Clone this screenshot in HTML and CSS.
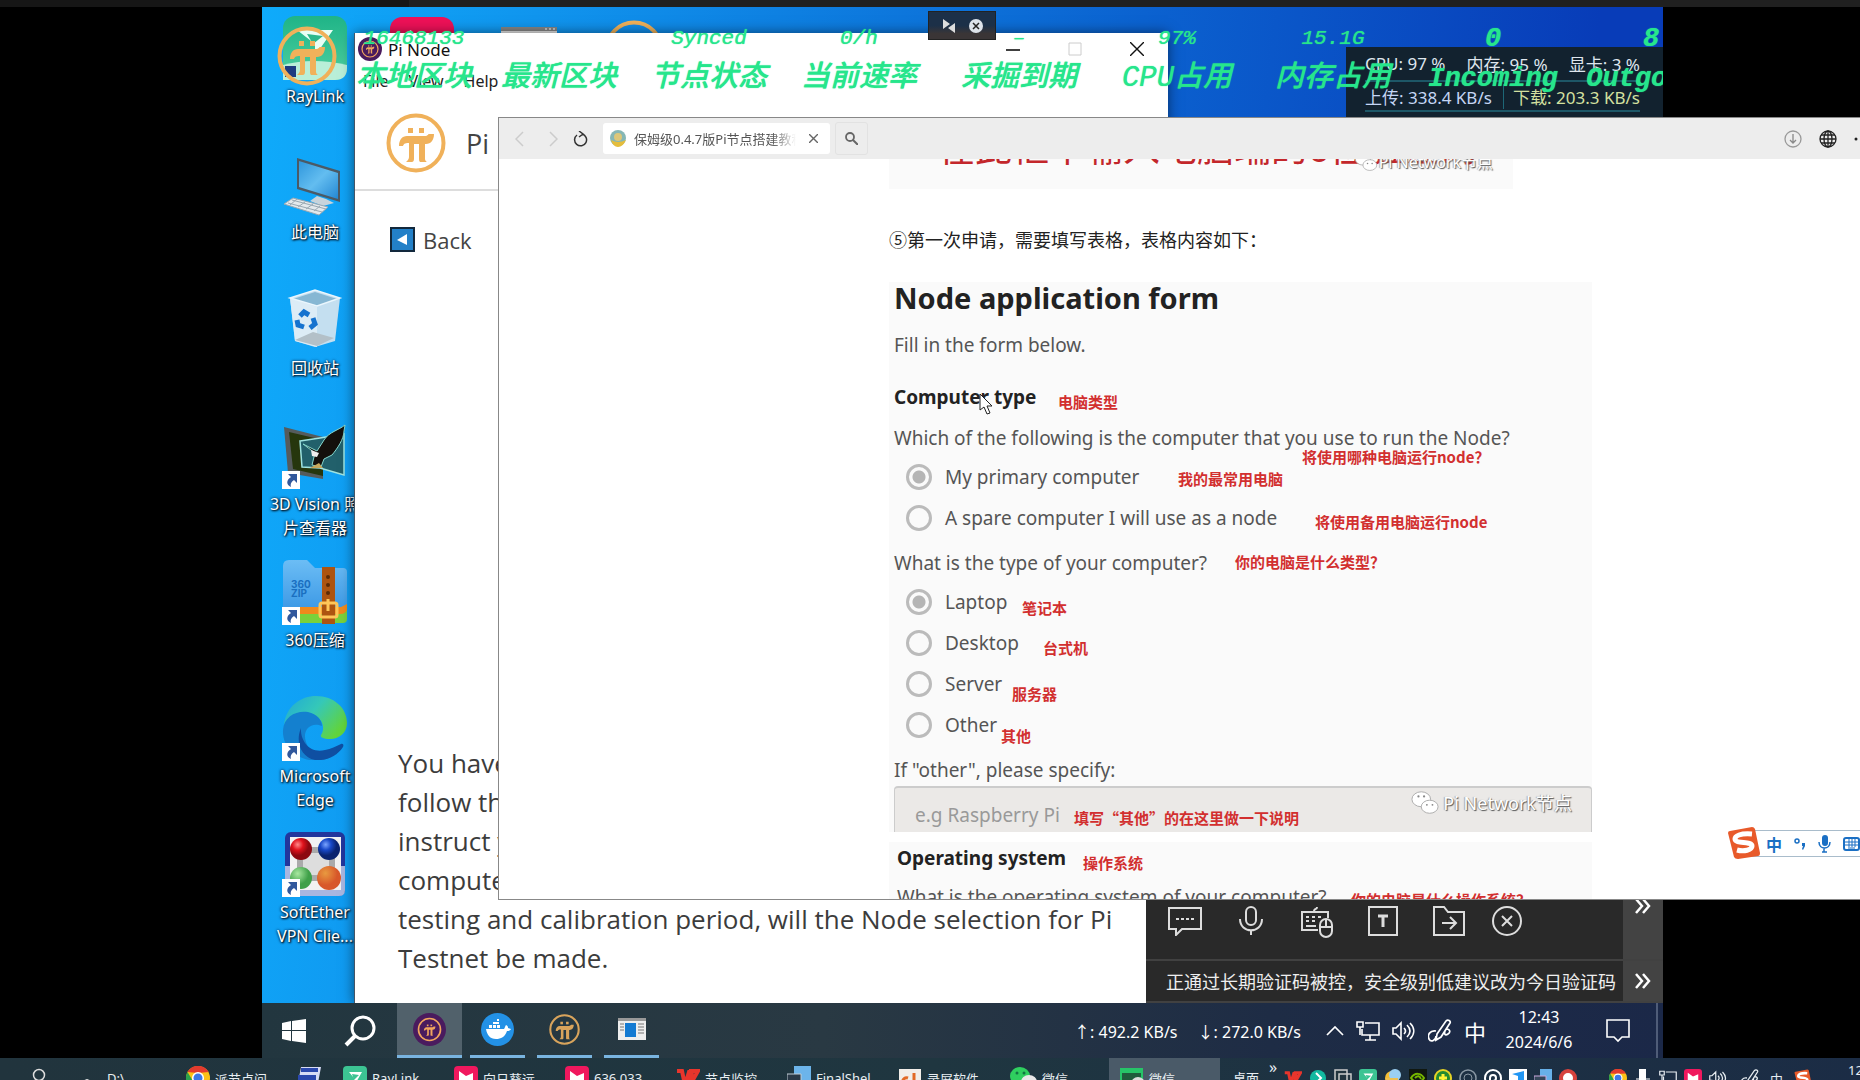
FILE: index.html
```html
<!DOCTYPE html>
<html lang="zh-CN">
<head>
<meta charset="utf-8">
<title>Pi Node</title>
<link rel="stylesheet" href="styles.css">
</head>
<body>
<svg class="defs" aria-hidden="true">
  <defs>
    <linearGradient id="g-ray" x1="0" y1="0" x2="0" y2="1"><stop offset="0" stop-color="#1fb487"/><stop offset="1" stop-color="#4fd0a0"/></linearGradient>
    <linearGradient id="g-scr" x1="0" y1="0" x2="1" y2="1"><stop offset="0" stop-color="#2f97dd"/><stop offset=".5" stop-color="#63bdf0"/><stop offset="1" stop-color="#2488d4"/></linearGradient>
    <linearGradient id="g-edge" x1="0" y1="0" x2="1" y2=".6"><stop offset="0" stop-color="#1fa8d8"/><stop offset=".5" stop-color="#35c8b8"/><stop offset="1" stop-color="#62d43c"/></linearGradient>
    <linearGradient id="g-zip" x1="0" y1="0" x2="0" y2="1"><stop offset="0" stop-color="#6cbdf5"/><stop offset="1" stop-color="#3f9be6"/></linearGradient>
    <radialGradient id="g-red" cx=".35" cy=".3"><stop offset="0" stop-color="#ff8a8a"/><stop offset=".5" stop-color="#e0121c"/><stop offset="1" stop-color="#8c0810"/></radialGradient>
    <radialGradient id="g-blu" cx=".35" cy=".3"><stop offset="0" stop-color="#7aa4ff"/><stop offset=".5" stop-color="#1848c8"/><stop offset="1" stop-color="#0a2370"/></radialGradient>
    <radialGradient id="g-grn" cx=".35" cy=".3"><stop offset="0" stop-color="#a8e8a0"/><stop offset="1" stop-color="#3fa048"/></radialGradient>
    <radialGradient id="g-org" cx=".35" cy=".3"><stop offset="0" stop-color="#e89a40"/><stop offset="1" stop-color="#d8582a"/></radialGradient>
    <symbol id="pi" viewBox="0 0 60 60">
      <g fill="currentColor"><rect x="22" y="15" width="5" height="5"/><rect x="33" y="15" width="5" height="5"/>
      <path d="M13 33c0-6 3-10 8-10h18c3 0 3-2 4-2h5c0 6-3 10-8 10h-1v14c0 3 1 3 2 4h-7c-1-1-1-2-1-4V31h-5v15c0 2-1 3-2 3h-6c2-2 3-3 3-5V30c-5 0-5 1-6 3z"/></g>
    </symbol>
    <symbol id="pi-ring" viewBox="0 0 60 60"><circle cx="30" cy="30" r="27.500" fill="none" stroke="currentColor" stroke-width="4"/><use href="#pi"/></symbol>
    <symbol id="pi-dark" viewBox="0 0 60 60"><circle cx="30" cy="30" r="30" fill="#4a1b5e"/><circle cx="30" cy="30" r="20" fill="none" stroke="#f2a65e" stroke-width="3"/><g color="#f2a65e" transform="translate(12 12) scale(.6)"><use href="#pi" width="60" height="60"/></g></symbol>
    <symbol id="shortcut" viewBox="0 0 18 18"><path fill="#fff" d="M0 0h18v18H0z"/><path fill="#31589c" d="M6 3h9v9l-3-3c-3 2-4 4-3 7-5-2-5-7 0-10z"/></symbol>
    <symbol id="ray" viewBox="0 0 24 24"><rect width="24" height="24" rx="4" fill="#3cc493"/><path fill="#fff" d="M6 6h13l-8 14v-8z"/><path fill="#3cc493" d="M9 8l7 1-5 5z"/></symbol>
    <symbol id="sun" viewBox="0 0 24 24"><rect width="24" height="24" rx="4" fill="#f0185e"/><path fill="#fff" d="M5 5l7 5 7-3v12l-7-2-7 4z"/></symbol>
    <symbol id="wps" viewBox="0 0 24 20"><path fill="none" stroke="#e8352c" stroke-width="4" d="M1 3h5l3 14 4-13h3l-2 13L22 3h-9"/></symbol>
    <symbol id="chrome" viewBox="0 0 24 24"><circle cx="12" cy="12" r="12" fill="#fbc116"/><path fill="#e33b2e" d="M1.500 6A12 12 0 0 1 22.500 6H12z"/><path fill="#2ca24c" d="M1.500 6l6 10 4 8A12 12 0 0 1 1.500 6z"/><path fill="#e33b2e" d="M1.500 6h21L12 7z"/><circle cx="12" cy="12" r="6" fill="#fff"/><circle cx="12" cy="12" r="4.500" fill="#3b78e7"/></symbol>
    <symbol id="wechat" viewBox="0 0 28 24"><ellipse cx="11" cy="10" rx="10" ry="9" fill="#2fcf5f"/><ellipse cx="20" cy="16" rx="8" ry="7" fill="#e8e8e8"/><circle cx="8" cy="7" r="1.500" fill="#174"/><circle cx="15" cy="7" r="1.500" fill="#174"/></symbol>
    <symbol id="net" viewBox="0 0 24 22"><g fill="none" stroke="currentColor" stroke-width="1.600"><path d="M9 3h14v12H6V9M14 15v5M9 20h11"/><path d="M1 2h6v5H1zM4 7v8"/></g></symbol>
    <symbol id="vol" viewBox="0 0 24 22"><g fill="none" stroke="currentColor" stroke-width="1.600"><path d="M1 8h3l5-5v16l-5-5H1zM12 8c2 2 2 4 0 6M15 5c4 4 4 8 0 12M18 3c5 5 5 11 0 16"/></g></symbol>
    <symbol id="pen" viewBox="0 0 24 24"><g fill="none" stroke="currentColor" stroke-width="1.700"><path d="M9 15L18 2c2-2 5 0 4 2L13 18l-5 3zM8 12c-6-1-9 4-7 8s7 1 7-3M18 10c4 0 5 3 2 5s-4 0-3-3"/></g></symbol>
    <symbol id="bubbles" viewBox="0 0 30 26"><g fill="#fff" stroke="#aaa" stroke-width="1"><ellipse cx="11" cy="9" rx="10" ry="8"/><ellipse cx="20" cy="17" rx="9" ry="7"/></g><g fill="#888"><circle cx="8" cy="6" r="1.200"/><circle cx="14" cy="6" r="1.200"/><circle cx="17" cy="15" r="1"/><circle cx="23" cy="15" r="1"/></g></symbol>
    <symbol id="more" viewBox="0 0 18 18"><path d="M2 2l6 7-6 7M9 2l6 7-6 7" fill="none" stroke="#fff" stroke-width="2.500"/></symbol>
    <symbol id="sogou" viewBox="0 0 34 34"><path fill="#e85a2a" d="M1 7Q1 5 3 5L25 1q2 0 3 2l5 24q0 3-2 3L11 33q-3 0-4-2z"/><path d="M25 8C13 7 8 10 8 13c0 5 17 2 17 7 0 4-8 6-15 4" fill="none" stroke="#fff" stroke-width="5"/></symbol>
  </defs>
</svg>

<div class="page">
  <div class="topstrip"></div>

  <main class="stage">
    <section class="remote" aria-label="Remote desktop">
      <div class="desktop">
        <div class="second-col">
          <svg viewBox="0 0 64 64" width="64" height="64"><rect width="64" height="64" rx="12" fill="#ee1158"/><path d="M12 18l9-5 5 10z" fill="#fff"/></svg>
          <svg viewBox="0 0 56 54" width="56" height="54"><path fill="#e6e6e6" d="M0 0h56v54H0z"/><path fill="#858585" d="M0 0h56v4H0z"/><path stroke="#fff" stroke-dasharray="2 2" d="M44 2h12"/></svg>
          <svg class="gold" width="60" height="60"><use href="#pi-ring"/></svg>
        </div>
        <ul class="icons">
          <li><svg viewBox="0 0 64 64"><rect width="64" height="64" rx="12" fill="url(#g-ray)"/><path fill="#e8fff5" d="M14 14h36L32 40V28z"/><path fill="#2db88b" d="M24 18l16 2-10 8z"/><path fill="#b9efd8" d="M0 49q30-8 64 0v3q0 12-12 12H0z"/><path fill="#1e3c80" d="M2 50h11v11H2z"/></svg><span>RayLink</span></li>
          <li><svg viewBox="0 0 64 64"><path fill="#4b5a66" d="M14 6l43 13v31L14 37z"/><path fill="url(#g-scr)" d="M16 9l39 12v26L16 35z"/><path fill="#c8d4dc" d="M34 44l9 3 8 4-11 3-13-5z"/><path fill="#e4e9ec" stroke="#9aa8b2" d="M1 52l9-6 35 9-9 8z"/><path d="M5 51l34 9M9 48l34 9M14 47l-7 6M22 50l-7 5M30 52l-7 5M37 54l-6 5" stroke="#9aa8b2"/></svg><span>此电脑</span></li>
          <li><svg viewBox="0 0 64 64"><path fill="#c4dff0" d="M7 10l25-8 25 8-5 43-20 6-20-6z"/><path fill="#86b7d3" d="M10 11l22-7 22 7-20 7z"/><path fill="#dcecf6" d="M7 10l27 9v40l-22-6z"/><path fill="#b3c0c8" d="M12 52l18-8 21 6-17 8z"/><path stroke="#eaf6fd" stroke-width="1.500" fill="none" d="M7 10l25-8 25 8-23 8z"/><g fill="none" stroke="#1673cf" stroke-width="5"><path d="M17 28l4-4 5 3M30 30l2 6-5 4M21 39l-6-2-1-5"/></g></svg><span>回收站</span></li>
          <li><svg viewBox="0 0 64 64"><path fill="#555b5c" d="M1 3l39 10v42L5 49z"/><path fill="#26360d" d="M6 8l34 8v36L10 45z"/><path fill="#22606b" stroke="#9fe3e0" stroke-width="1.500" d="M17 17l20-3 24-4v41l-24-7-18-1z"/><path fill="#14100c" stroke="#86d9cf" d="M62 1C56 6 46 8 41 16L34 27l-14-7 12 9-3 12 9 2 3-8 8-4c5-6 12-16 12-24z"/><path fill="#eee" d="M28 26l8 3-2 4-5-1z"/><path fill="#c8a85c" d="M27 44l9-5 4 5z"/></svg><svg class="arrow"><use href="#shortcut"/></svg><span>3D Vision 照<br>片查看器</span></li>
          <li><svg viewBox="0 0 64 64"><path fill="#7ad13b" d="M0 46h64v13q0 4-4 4H0z"/><path fill="#f08a1c" d="M0 44h64v6q-2 4-6 4H0z"/><path fill="url(#g-zip)" d="M0 6q0-6 6-6h18l8 8h28q4 0 4 4v32l-6 3H0z"/><path fill="#ad5410" d="M39 7h13v57H39z"/><g fill="#5c2a05"><circle cx="45" cy="17" r="2"/><circle cx="45" cy="25" r="2"/><circle cx="45" cy="33" r="2"/></g><rect x="37" y="43" width="17" height="14" rx="2" fill="none" stroke="#ffc658" stroke-width="3"/><path d="M45 39v12" stroke="#ffc658" stroke-width="3"/><g class="zip"><text x="8" y="28">360</text><text x="8" y="37">ZIP</text></g></svg><svg class="arrow"><use href="#shortcut"/></svg><span>360压缩</span></li>
          <li><svg viewBox="0 0 64 64"><path fill="url(#g-edge)" d="M1 29C3 10 18 0 33 0c18 0 31 12 31 27 0 10-8 16-17 16-7 0-10-2-9-4 4-5 3-16-8-21C18 14 6 18 1 29z"/><path fill="#1480cf" d="M0 34C1 20 14 14 25 16c9 2 14 8 14 14-12-5-20 5-16 16 3 9 10 14 20 18C18 68-1 54 0 34z"/><path fill="#0f4fa2" d="M18 32c-1 13 9 26 24 22 6-1 11-4 16-6 2-1 3 1 2 3-6 9-16 14-28 13-14-3-20-18-14-32z"/></svg><svg class="arrow"><use href="#shortcut"/></svg><span>Microsoft<br>Edge</span></li>
          <li><svg viewBox="0 0 64 64"><rect x="2" width="60" height="64" rx="6" fill="#22369c"/><path fill="#a9b6e0" d="M2 34h60v24q0 6-6 6H2z"/><path fill="#f2f2f2" d="M7 5h51v53H7z"/><path d="M17 18h32v28H17z" stroke="#aaa" stroke-width="6" fill="#ddd"/><circle cx="18" cy="17" r="11" fill="url(#g-red)"/><circle cx="46" cy="17" r="11" fill="url(#g-blu)"/><circle cx="18" cy="46" r="11" fill="url(#g-grn)"/><circle cx="46" cy="46" r="12" fill="url(#g-org)"/></svg><svg class="arrow"><use href="#shortcut"/></svg><span>SoftEther<br>VPN Clie...</span></li>
        </ul>

        <section class="node-win">
          <header class="titlebar">
            <svg width="24" height="24"><use href="#pi-dark"/></svg><span>Pi Node</span>
            <div class="controls">
              <button aria-label="Minimize"><svg width="14" height="14"><path d="M0 8h14" stroke="#000" stroke-width="1.500"/></svg></button>
              <button aria-label="Maximize"><svg width="14" height="14"><path d="M1 1h12v12H1z" stroke="#ccc" fill="none"/></svg></button>
              <button aria-label="Close"><svg width="14" height="14"><path d="M0 0l14 14M14 0L0 14" stroke="#111" stroke-width="1.400"/></svg></button>
            </div>
          </header>
          <nav class="menubar"><button>File</button><button>View</button><button>Help</button></nav>
          <div class="brand"><svg class="gold" width="60" height="60"><use href="#pi-ring"/></svg><h1>Pi Node</h1></div>
          <a class="back" href="#"><svg width="25" height="25"><path fill="#2380c8" stroke="#12283c" stroke-width="2" d="M1 1h23v23H1z"/><path fill="#fff" d="M17 7v11l-10-5z"/></svg>Back</a>
          <p class="notice">You have submitted your application, please<br>follow the steps in this guide, they will<br>instruct you on how to prepare your<br>computer. Only after the end of this first<br>testing and calibration period, will the Node selection for Pi<br>Testnet be made.</p>
        </section>

        <aside class="monitor">
          <div class="stats"><span>CPU: 97 %</span><span>内存: 95 %</span><span>显卡: 3 %</span></div>
          <div class="stats net"><span>上传: 338.4 KB/s</span><span class="down">下载: 203.3 KB/s</span></div>
        </aside>

        <aside class="assist">
          <div class="tools">
            <button aria-label="Chat"><svg width="34" height="30" viewBox="0 0 34 30"><path d="M1 2h32v21H14l-6 6v-6H1zM8 13h3M13 13h3M18 13h3M23 13h3"/></svg></button>
            <button aria-label="Voice"><svg width="26" height="30" viewBox="0 0 26 30"><rect x="8" y="1" width="10" height="18" rx="5"/><path d="M2 13c0 15 22 15 22 0M13 24v5"/></svg></button>
            <button aria-label="Keyboard and mouse"><svg width="34" height="32" viewBox="0 0 34 32"><path d="M18 24H2V6h26v6M14 6c0-5 3-1 3-5M6 11h3M12 11h3M18 11h3M6 15h3M12 15h3M6 20h10"/><rect x="20" y="13" width="12" height="18" rx="6"/><path d="M20 21h12M26 13v8"/></svg></button>
            <button aria-label="Text"><svg width="30" height="30" viewBox="0 0 30 30"><path d="M1 1h28v28H1z"/><path d="M10 10h10M15 10v11" stroke-width="3"/></svg></button>
            <button aria-label="Send file"><svg width="32" height="30" viewBox="0 0 32 30"><path d="M1 29V1h10l4 5h16v23zM9 17h14M17 11l6 6-6 6"/></svg></button>
            <button aria-label="Disconnect"><svg width="30" height="30" viewBox="0 0 30 30"><circle cx="15" cy="15" r="14"/><path d="M10 10l10 10M20 10L10 20"/></svg></button>
          </div>
          <button class="fold" aria-label="Collapse tools"><svg width="18" height="18"><use href="#more"/></svg></button>
          <p>正通过长期验证码被控，安全级别低建议改为今日验证码</p>
          <button class="fold low" aria-label="Collapse message"><svg width="18" height="18"><use href="#more"/></svg></button>
        </aside>

        <div class="overlay">
          <svg class="gold ring" width="60" height="60"><use href="#pi-ring"/></svg>
          <dl class="hud">
            <div><dd>16468133</dd><dt>本地区块</dt></div>
            <div><dd></dd><dt>最新区块</dt></div>
            <div><dd>Synced</dd><dt>节点状态</dt></div>
            <div><dd>0/h</dd><dt>当前速率</dt></div>
            <div><dd>–</dd><dt>采掘到期</dt></div>
            <div><dd>97%</dd><dt>CPU占用</dt></div>
            <div><dd>15.1G</dd><dt>内存占用</dt></div>
            <div class="wide"><dd>0</dd><dt>Incoming</dt></div>
            <div class="wide"><dd>8</dd><dt>Outgoing</dt></div>
          </dl>
        </div>
      </div>

      <footer class="taskbar">
        <button aria-label="Start"><svg width="24" height="24" viewBox="0 0 24 24"><path fill="#fff" d="M0 4l9-2v9H0zM10 2l14-2v11H10zM0 12h9v10l-9-2zM10 12h14v12l-14-2z"/></svg></button>
        <button aria-label="Search"><svg width="32" height="32" viewBox="0 0 32 32"><circle cx="19" cy="13" r="11" fill="none" stroke="#fff" stroke-width="3"/><path d="M11 21l-9 9" stroke="#fff" stroke-width="4"/></svg></button>
        <button class="app active" aria-label="Pi Node"><svg width="33" height="33"><use href="#pi-dark"/></svg></button>
        <button class="app" aria-label="Docker"><svg width="33" height="33" viewBox="0 0 33 33"><circle cx="16.500" cy="16.500" r="16.500" fill="#2391e6"/><path fill="#fff" d="M5 16h18c1-1 1-3 2-4 2 1 2 2 2 3l3 1c-1 2-3 2-4 2-2 6-6 8-11 8-6 0-9-4-10-10zM8 12h3v3H8zM12 12h3v3h-3zM16 12h3v3h-3zM12 9h6v2h-6zM16 6h2v2h-2z"/></svg></button>
        <button class="app" aria-label="Pi Network"><svg class="tan" width="31" height="31"><use href="#pi-ring"/></svg></button>
        <button class="app" aria-label="Application"><svg width="28" height="22" viewBox="0 0 28 22"><path fill="#eee" d="M0 0h28v22H0z"/><path fill="#999" d="M0 0h28v3H0z"/><path fill="#137ad2" d="M7 5h11v14H7z"/><path stroke="#777" d="M2 6h4M2 9h4M2 12h4M20 6h6M20 9h6M20 12h6M20 15h6"/></svg></button>
        <div class="speed"><span>↑: 492.2 KB/s</span><span>↓: 272.0 KB/s</span></div>
        <div class="tray">
          <svg width="18" height="10"><path d="M1 9l8-8 8 8" fill="none" stroke="#fff" stroke-width="1.700"/></svg>
          <svg width="24" height="22"><use href="#net"/></svg>
          <svg width="24" height="22"><use href="#vol"/></svg>
          <svg width="24" height="24"><use href="#pen"/></svg>
          <span class="ime">中</span>
        </div>
        <time>12:43<br>2024/6/6</time>
        <button class="bell" aria-label="Notifications"><svg width="24" height="24" viewBox="0 0 24 24"><path d="M1 1h22v17h-7l-4 4-4-4H1z" fill="none" stroke="#fff" stroke-width="1.600"/></svg></button>
        <button class="peek" aria-label="Show desktop"></button>
      </footer>
      <div class="session-bar">
        <button aria-label="Switch"><svg width="14" height="14"><path fill="#ddd" d="M1 0l7 5-7 5zM13 4v10L6 9z"/></svg></button>
        <button aria-label="Close session"><svg width="14" height="14"><circle cx="7" cy="7" r="7" fill="#dde3ea"/><path d="M4 4l6 6M10 4l-6 6" stroke="#222" stroke-width="1.500"/></svg></button>
      </div>
    </section>

    <section class="browser">
      <header class="toolbar">
        <button aria-label="Back"><svg width="9" height="16"><path d="M8 1L1 8l7 7" fill="none" stroke="#ccc" stroke-width="1.500"/></svg></button>
        <button aria-label="Forward"><svg width="9" height="16"><path d="M1 1l7 7-7 7" fill="none" stroke="#ccc" stroke-width="1.500"/></svg></button>
        <button aria-label="Reload"><svg width="15" height="16" viewBox="0 0 15 16"><path d="M9 3A6 6 0 1 1 4 4M6 0l4 3-4 3" fill="none" stroke="#333" stroke-width="1.500"/></svg></button>
        <div class="tab"><svg width="17" height="17"><circle cx="8" cy="8" r="8" fill="#86b7b5"/><path fill="#e5bd3c" d="M1 10q7 4 15 0q-3 7-8 7t-7-7z"/><circle cx="8" cy="7" r="4" fill="#dcc779"/></svg><span>保姆级0.4.7版Pi节点搭建教程</span><button aria-label="Close tab"><svg width="9" height="9"><path d="M0 0l9 9M9 0L0 9" stroke="#666" stroke-width="1.400"/></svg></button></div>
        <button class="find" aria-label="Search"><svg width="13" height="13"><circle cx="5" cy="5" r="4" fill="none" stroke="#666" stroke-width="1.800"/><path d="M8 8l5 5" stroke="#666" stroke-width="2"/></svg></button>
        <div class="right-tools">
          <button aria-label="Downloads"><svg width="18" height="18"><circle cx="9" cy="9" r="8" fill="none" stroke="#999" stroke-width="1.300"/><path d="M9 4v9M6 10l3 3 3-3" fill="none" stroke="#888" stroke-width="1.300"/></svg></button>
          <button aria-label="Open in browser"><svg width="18" height="18"><g fill="none" stroke="#222" stroke-width="1.300"><circle cx="9" cy="9" r="8"/><ellipse cx="9" cy="9" rx="4" ry="8"/><path d="M9 1v16M1 9h16M2 5h14M2 13h14"/></g></svg></button>
          <button aria-label="More"><svg width="14" height="4"><g fill="#222"><circle cx="2" cy="2" r="1.500"/><circle cx="8" cy="2" r="1.500"/></g></svg></button>
        </div>
      </header>
      <article>
        <figure class="strip"><p>在此框中输入电脑端的6位验证码</p><figcaption class="mark"><svg width="24" height="20"><use href="#bubbles"/></svg>Pi Network节点</figcaption></figure>
        <p class="step">⑤第一次申请，需要填写表格，表格内容如下：</p>
        <form class="sheet">
          <h2>Node application form</h2>
          <p class="fill">Fill in the form below.</p>
          <h3>Computer type</h3>
          <p>Which of the following is the computer that you use to run the Node?</p>
          <div class="choices">
            <label><input type="radio" name="use" checked>My primary computer</label>
            <label><input type="radio" name="use">A spare computer I will use as a node</label>
          </div>
          <p>What is the type of your computer?</p>
          <div class="choices">
            <label><input type="radio" name="kind" checked>Laptop</label>
            <label><input type="radio" name="kind">Desktop</label>
            <label><input type="radio" name="kind">Server</label>
            <label><input type="radio" name="kind">Other</label>
          </div>
          <label class="ask" for="other">If "other", please specify:</label>
          <input class="other" id="other" type="text" placeholder="e.g Raspberry Pi">
          <span class="note n-type">电脑类型</span>
          <span class="note n-which">将使用哪种电脑运行node？</span>
          <span class="note n-main">我的最常用电脑</span>
          <span class="note n-spare">将使用备用电脑运行node</span>
          <span class="note n-kind">你的电脑是什么类型？</span>
          <span class="note n-laptop">笔记本</span>
          <span class="note n-desk">台式机</span>
          <span class="note n-server">服务器</span>
          <span class="note n-other">其他</span>
          <span class="note n-fill">填写“其他”的在这里做一下说明</span>
          <span class="mark"><svg width="28" height="26"><use href="#bubbles"/></svg>Pi Network节点</span>
          <svg class="cursor" width="14" height="22" viewBox="0 0 14 22"><path fill="#fff" stroke="#222" d="M1 1v16l4-3 3 7 3-1-3-7h5z"/></svg>
        </form>
        <section class="sheet os">
          <h3>Operating system</h3>
          <p>What is the operating system of your computer?</p>
          <span class="note n-os">操作系统</span>
          <span class="note n-osq">你的电脑是什么操作系统？</span>
        </section>
      </article>
      <div class="ime-bar">
        <svg class="logo" width="34" height="34"><use href="#sogou"/></svg>
        <b>中</b>
        <svg width="12" height="13"><circle cx="3" cy="4" r="2" fill="none" stroke="#1a6fc4" stroke-width="1.500"/><path d="M8 6h3v3l-2 4-1-1 1-3H8z" fill="#1a6fc4"/></svg>
        <svg width="13" height="18"><rect x="4" width="6" height="11" rx="3" fill="#1a6fc4"/><path d="M1 7c0 8 11 8 11 0M6 13v4M4 17h5" fill="none" stroke="#1a6fc4" stroke-width="1.500"/></svg>
        <svg width="17" height="14"><rect x="1" y="1" width="15" height="12" rx="2" fill="none" stroke="#1a6fc4" stroke-width="2"/><path d="M2 5h13M2 8h13M6 2v8M9 2v8M12 2v8M5 11h7" stroke="#1a6fc4"/></svg>
      </div>
    </section>
  </main>

  <footer class="local">
    <div class="lead">
      <svg width="14" height="24" viewBox="0 0 14 24"><circle cx="7" cy="9" r="5.500" fill="none" stroke="#ddd" stroke-width="1.500"/></svg>
      <svg class="drive" width="10" height="4"><path d="M0 3l5-2 5 2z" fill="#eee"/></svg>
      <span>D:\</span>
    </div>
    <button class="task"><svg width="24" height="24"><use href="#chrome"/></svg>派节点问</button>
    <button class="task slim" aria-label="Remote tool"><svg width="24" height="24"><path fill="#d7dcf5" d="M4 1h20l-3 16H1z"/><path fill="#2b49ae" d="M4 2h17v4H4zM1 9h18v7H1z"/></svg></button>
    <button class="task"><svg width="24" height="24"><use href="#ray"/></svg>RayLink</button>
    <button class="task"><svg width="24" height="24"><use href="#sun"/></svg>向日葵远</button>
    <button class="task"><svg width="24" height="24"><use href="#sun"/></svg>636,033</button>
    <button class="task"><svg width="24" height="20"><use href="#wps"/></svg>节点监控</button>
    <button class="task"><svg width="24" height="24"><path fill="#6cb4ea" d="M7 0h17v14H7z"/><path fill="#2a3947" stroke="#c0ccd4" d="M0 8h14v12H0z"/></svg>FinalShel</button>
    <button class="task"><svg width="24" height="24"><path fill="#f2eee9" d="M1 3h22v21H1z"/><path fill="none" stroke="#e26a26" stroke-width="3" d="M10 12a4 4 0 1 0 1 7M16 7v11"/></svg>录屏软件</button>
    <button class="task"><svg width="28" height="24"><use href="#wechat"/></svg>微信</button>
    <button class="task on"><svg width="24" height="24"><path fill="#1f5c3c" stroke="#27c468" stroke-width="2" d="M1 3h21v21H1z"/><path fill="#27c468" d="M1 2h21v5H1z"/><circle cx="18" cy="18" r="7" fill="#ddd"/></svg>微信</button>
    <span class="desk">桌面</span><span class="chev">»</span>
    <div class="mini">
      <svg width="18" height="16"><use href="#wps"/></svg>
      <svg width="18" height="18"><circle cx="9" cy="9" r="8" fill="#12b8a0"/><path d="M7 4l5 5-5 5" stroke="#fff" stroke-width="2" fill="none"/></svg>
      <svg width="18" height="18"><path d="M1 1h12v11H1zM5 5h12v12H5z" fill="#22343e" stroke="#ccc" stroke-width="1.500"/></svg>
      <svg width="18" height="18"><use href="#ray"/></svg>
      <svg width="18" height="18"><circle cx="8" cy="9" r="7" fill="#f4bd34"/><circle cx="11" cy="6" r="6" fill="#9bd0f2"/><path d="M2 9h12v8H2z" fill="#eec050"/></svg>
      <svg width="18" height="18"><path d="M0 0h18v18H0z" fill="#101810"/><path d="M2 9c4-6 10-5 13 0-4 6-9 5-13 0zM6 9q4-4 6 1" fill="none" stroke="#76b900" stroke-width="2"/></svg>
      <svg width="18" height="18"><circle cx="9" cy="9" r="9" fill="#e5d326"/><circle cx="9" cy="9" r="7" fill="#238a31"/><path d="M5 9h8M9 5v8" stroke="#fff336" stroke-width="3"/></svg>
      <svg width="18" height="18"><circle cx="9" cy="9" r="8" fill="none" stroke="#8a98a4" stroke-width="1.500"/><circle cx="9" cy="9" r="4" fill="none" stroke="#8a98a4"/></svg>
      <svg width="18" height="18"><circle cx="9" cy="9" r="8" fill="none" stroke="#fff" stroke-width="2"/><path d="M6 13V9a3 3 0 1 1 3 3" fill="none" stroke="#fff" stroke-width="2"/></svg>
      <svg width="18" height="18"><path d="M0 0h18v18H0z" fill="#fff"/><path d="M3 5l12-3v12H9V7z" fill="#2196f3"/></svg>
      <svg width="18" height="18"><path d="M6 0h12v12H6z" fill="#67b0e8"/><path d="M0 7h12v9H0z" fill="#35475a" stroke="#cad"/></svg>
      <svg width="18" height="18"><circle cx="9" cy="9" r="7" fill="#fff" stroke="#d6423d" stroke-width="4"/></svg>
    </div>
    <div class="mini end">
      <svg width="18" height="18"><use href="#chrome"/></svg>
      <svg width="18" height="18"><rect x="5" width="7" height="13" fill="#fff"/><path d="M2 10h14" stroke="#fff"/></svg>
      <svg width="18" height="18"><use href="#net"/></svg>
      <svg width="18" height="18"><use href="#sun"/></svg>
      <svg width="18" height="18"><use href="#vol"/></svg>
    </div>
    <div class="mini ime-tray">
      <svg width="18" height="18"><use href="#pen"/></svg>
      <span>中</span>
      <svg width="18" height="18"><use href="#sogou"/></svg>
    </div>
    <time class="clock">12:43</time>
  </footer>
</div>
</body>
</html>
```
FILE: styles.css
```css
* { box-sizing: border-box; }
body { margin: 0; background: #000; color: #333; font-family: "Noto Sans", "Noto Sans CJK SC", sans-serif; overflow: hidden; }
h1, h2, h3, p, ul, dl, dd, figure { margin: 0; padding: 0; }
button { border: 0; padding: 0; background: none; color: inherit; font: inherit; display: flex; align-items: center; justify-content: center; }
svg { display: block; flex: none; }
.defs { position: absolute; width: 0; height: 0; }
.gold { color: #f0b15a; }
.tan { color: #d9a45c; }

.page { display: flex; flex-direction: column; height: 100vh; }
.topstrip { height: 7px; flex: none; background: linear-gradient(90deg, #161616 22%, #202020 22%); }
.stage { position: relative; flex: 1; min-height: 0; overflow: hidden; }
.remote { position: relative; height: 100%; margin: 0 197px 0 262px; display: flex; flex-direction: column; overflow: hidden; }
.desktop { position: relative; flex: 1; min-height: 0; overflow: hidden; background: linear-gradient(97deg, #0fabfb 0%, #1095ee 18%, #0b62d0 58%, #083cb8 88%); }

/* desktop icons */
.icons { list-style: none; width: 106px; padding-top: 9px; }
.icons li { position: relative; height: 136px; display: flex; flex-direction: column; align-items: center; gap: 4px; font-size: 16px; line-height: 24px; color: #fff; text-align: center; white-space: nowrap; text-shadow: 1px 1px 2px #000, 0 0 3px #002; }
.icons li > svg:first-child { width: 66px; height: 64px; }
.icons .arrow { position: absolute; left: 20px; top: 47px; width: 18px; height: 18px; }
.zip { font: 700 10px "Inter", sans-serif; fill: #1a6fc0; text-shadow: none; }
.second-col { position: absolute; left: 128px; top: 10px; display: flex; gap: 47px; align-items: flex-start; }
.second-col svg:nth-child(2) { margin-top: 10px; }
.second-col svg:nth-child(3) { margin-top: 3px; }

/* Pi Node window */
.node-win { position: absolute; left: 92px; top: 26px; width: 814px; bottom: 0; background: #fff; border-left: 1px solid #456; box-shadow: 0 0 12px #0008; display: flex; flex-direction: column; }
.titlebar { display: flex; align-items: center; height: 32px; padding-left: 3px; gap: 6px; font-size: 17px; color: #111; }
.controls { margin-left: auto; display: flex; }
.controls button { width: 62px; height: 32px; }
.menubar { display: flex; gap: 20px; height: 32px; padding-left: 8px; font-size: 16px; color: #222; }
.brand { display: flex; align-items: center; gap: 20px; height: 94px; padding: 0 0 0 31px; border-bottom: 2px solid #ddd; color: #444; }
.brand h1 { font: 400 27px "Open Sans", sans-serif; }
.back { display: flex; align-items: center; gap: 8px; margin: 36px 0 0 35px; height: 25px; color: #444; font: 22px "Open Sans", sans-serif; text-decoration: none; }
.notice { margin: auto 0 25px 43px; color: #3c3c3c; font: 26px/39px "Open Sans", sans-serif; white-space: nowrap; }

/* hardware monitor */
.monitor { position: absolute; right: 0; top: 40px; width: 317px; height: 72px; padding: 0 23px 0 19px; background: #12222f; color: #dfe6ee; font-size: 17px; }
.stats { display: flex; justify-content: space-between; align-items: center; height: 35px; border-bottom: 2px solid #1d5767; white-space: nowrap; }
.stats.net { height: 30px; color: #c5d6f5; }
.down { color: #d4e0a0; padding-left: 9px; border-left: 1px solid #1d6777; }

/* remote-control helper */
.assist { position: absolute; right: 0; bottom: 0; width: 517px; height: 114px; display: grid; grid-template: 72px 42px / 1fr 40px; background: #292929; color: #eee; }
.assist > * { border-bottom: 2px solid #414141; }
.tools { display: flex; padding: 17px 0 0 6px; }
.tools button { width: 66px; align-items: flex-start; }
.tools button:last-child { width: 49px; }
.tools svg { fill: none; stroke: #ddd; stroke-width: 2; }
.fold { background: #434343; padding-top: 8px; align-items: flex-start; }
.fold.low { padding: 0; align-items: center; }
.assist p { padding-left: 20px; font-size: 18px; line-height: 42px; white-space: nowrap; }

/* green node read-out */
.overlay { position: absolute; left: 0; right: 0; top: 0; height: 110px; overflow: hidden; color: #26e68c; }
.ring { position: absolute; left: 15px; top: 19px; }
.hud { position: absolute; left: 79px; top: 16px; display: grid; grid-template-columns: 146px 144px 156px 144px 176px 140px 172px 148px 168px; font-family: "Liberation Mono", "Noto Sans CJK SC", monospace; font-weight: 500; font-style: italic; text-align: center; text-shadow: 0 0 1px #2fe08f; }
.hud dd { height: 32px; font-size: 21px; line-height: 32px; }
.hud dt { font-size: 29px; line-height: 48px; white-space: nowrap; }
.hud .wide { font-weight: 700; }
.hud .wide dd { font-size: 27px; }
.hud .wide dt { font-size: 27px; }

.session-bar { position: absolute; left: 666px; top: 4px; width: 68px; height: 29px; display: flex; align-items: center; justify-content: center; gap: 13px; background: linear-gradient(#1c3048 50%, #3a3536 80%); border: 1px solid #222; }

/* remote taskbar */
.taskbar { flex: none; display: flex; align-items: stretch; height: 55px; background: linear-gradient(90deg, #22363f, #293943 40%, #1e2c45 72%, #1b2848); color: #fff; }
.taskbar > button { width: 67px; }
.taskbar > button:first-child { width: 64px; }
.taskbar .app { border-bottom: 3px solid #79b4e0; width: 55px; margin-left: 12px; }
.taskbar .app.active { width: 65px; background: #51616b; margin: 0 -4px 0 4px; }
.speed { margin-left: auto; display: flex; gap: 20px; align-items: center; font-size: 16px; white-space: nowrap; }
.tray { display: flex; align-items: center; gap: 12px; margin-left: 25px; }
.ime { font-size: 22px; }
.taskbar time { width: 106px; text-align: center; font-size: 16px; line-height: 25px; padding-top: 2px; }
.taskbar .bell { width: 52px; }
.taskbar .peek { width: 7px; margin-left: 12px; border-left: 2px solid #4f5c78; }

/* browser window */
.browser { position: absolute; left: 498px; right: 0; top: 110px; bottom: 158px; border: solid #888; border-width: 1px 0 1px 1px; background: #fff; overflow: hidden; display: flex; flex-direction: column; }
.toolbar { flex: none; height: 41px; padding: 0 0 0 16px; background: #ededed; display: flex; align-items: center; }
.toolbar > button { width: 34px; justify-content: flex-start; }
.toolbar > button:nth-child(3) { width: 21px; margin-left: -10px; margin-right: 9px; }
.tab { display: flex; align-items: center; gap: 7px; width: 227px; height: 31px; padding: 0 12px 0 7px; background: #fff; border-radius: 3px; font-size: 13px; color: #555; white-space: nowrap; }
.tab span { flex: 1; min-width: 0; margin-right: 6px; overflow: hidden; -webkit-mask: linear-gradient(90deg, #000 85%, transparent); mask: linear-gradient(90deg, #000 85%, transparent); }
.toolbar .find { width: 33px; height: 33px; margin-left: 5px; border: 1px solid #e2e2e2; border-radius: 3px; justify-content: center; }
.right-tools { display: flex; gap: 17px; margin: 0 -8px 0 auto; }

/* article */
article { margin-left: 390px; width: 703px; }
.strip { position: relative; width: 624px; height: 30px; background: #fafafa; overflow: hidden; }
.strip p { margin: -29px 0 0 49px; color: #c3272b; font-size: 37px; line-height: 36px; white-space: nowrap; }
.mark { position: absolute; display: flex; align-items: center; gap: 4px; font-size: 18px; line-height: 26px; color: #fff; text-shadow: 1px 1px 1px #555, -1px 0 1px #aaa; white-space: nowrap; }
.strip .mark { right: 20px; top: -10px; font-size: 16px; gap: 1px; }
.step { margin: 36px 0 27px; font-size: 18px; line-height: 30px; color: #222; white-space: nowrap; }
.sheet { position: relative; padding-left: 5px; background: #fafafa; color: #555; font-size: 19px; line-height: 32px; white-space: nowrap; }
.sheet h2 { font-size: 29px; line-height: 32px; color: #222; }
.sheet h3 { margin-top: 20px; font-size: 19px; line-height: 32px; color: #222; }
.sheet p { margin-top: 9px; }
.sheet .fill { margin-top: 15px; }
.choices { padding: 2px 0 0 12px; }
.choices label { display: flex; align-items: center; gap: 13px; height: 41px; }
.choices input { appearance: none; width: 26px; height: 26px; margin: 0; border: 3px solid #bbb; border-radius: 50%; background: #fafafa; }
.choices input:checked { background: radial-gradient(circle, #b5b5b5 6px, #fafafa 7px); }
.ask { display: block; margin-top: 9px; }
.other { display: block; width: 698px; height: 46px; margin: 0; padding: 9px 20px 0; border: 1px solid #ccc; border-width: 2px 1px 0; border-radius: 4px 4px 0 0; background: #ebe9e7; font: inherit; outline: 0; }
.other::placeholder { color: #999; opacity: 1; }
.note { position: absolute; color: #d22f2f; font: 700 15px/20px "Noto Sans CJK SC", sans-serif; }
.n-type { left: 169px; top: 110px; }
.n-which { left: 413px; top: 165px; }
.n-main { left: 289px; top: 187px; }
.n-spare { left: 426px; top: 230px; }
.n-kind { left: 346px; top: 270px; }
.n-laptop { left: 133px; top: 316px; }
.n-desk { left: 154px; top: 356px; }
.n-server { left: 123px; top: 402px; }
.n-other { left: 112px; top: 444px; }
.n-fill { left: 185px; top: 526px; }
form .mark { right: 20px; top: 508px; }
.cursor { position: absolute; left: 90px; top: 111px; }
.os { margin-top: 10px; padding-left: 8px; height: 80px; }
.os h3 { margin: 0; }
.os p { margin-top: 7px; }
.n-os { left: 194px; top: 11px; }
.n-osq { left: 462px; top: 48px; }

/* input-method bar */
.ime-bar { position: absolute; right: 0; bottom: 42px; width: 112px; height: 27px; display: flex; align-items: center; gap: 12px; padding-left: 18px; border: solid #a9bccb; border-width: 1px 0; background: #fff; color: #1a6fc4; font-size: 16px; }
.ime-bar .logo { position: absolute; left: -21px; top: -5px; }

/* local taskbar: the lower half runs off the screen edge */
.local { flex: none; height: 22px; overflow: hidden; display: flex; align-items: flex-start; background: linear-gradient(90deg, #21343d, #1f3640 50%, #1b2c45); color: #e8eef2; font-size: 13px; white-space: nowrap; }
.local > * { flex: none; height: 40px; }
.lead { display: flex; align-items: center; width: 175px; padding-left: 32px; }
.lead .drive { margin: 4px 15px 0 36px; }
.task { width: 111px; padding-left: 11px; gap: 5px; justify-content: flex-start; }
.task.slim { width: 46px; }
.task.on { background: #4a5a68; }
.desk { padding-left: 13px; line-height: 40px; }
.chev { padding-left: 10px; line-height: 18px; font-size: 16px; width: 25px; }
.mini { display: flex; align-items: center; gap: 7px; }
.mini.end { margin-left: 32px; }
.ime-tray { margin-left: 14px; gap: 11px; }
.clock { margin-left: auto; width: 12px; line-height: 24px; }
```
